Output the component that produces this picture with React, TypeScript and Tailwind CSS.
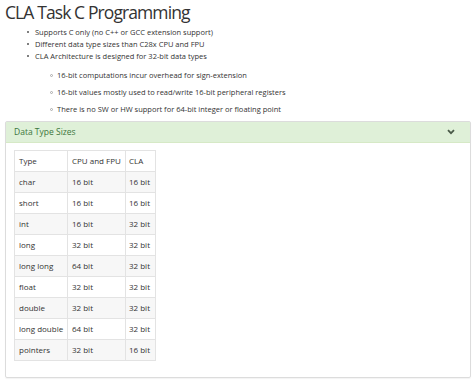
import React from "react";

const rows: [string, string, string][] = [
  ["char", "16 bit", "16 bit"],
  ["short", "16 bit", "16 bit"],
  ["int", "16 bit", "32 bit"],
  ["long", "32 bit", "32 bit"],
  ["long long", "64 bit", "32 bit"],
  ["float", "32 bit", "32 bit"],
  ["double", "32 bit", "32 bit"],
  ["long double", "64 bit", "32 bit"],
  ["pointers", "32 bit", "16 bit"],
];

export default function App() {
  return (
    <div
      className="w-[474px] h-[381px] bg-white text-[#333] overflow-hidden"
      style={{ fontFamily: '"Open Sans", "Noto Sans", sans-serif' }}
    >
      <h1 className="pl-[5px] pt-0 text-[17.5px] leading-[24px] tracking-[-0.9px] text-[#333]">
        CLA Task C Programming
      </h1>
      <ul className="mt-[2px] pl-[27px] text-[7.5px] leading-[12px]">
        <li className="flex items-center">
          <span className="w-[2px] h-[2px] rounded-full bg-[#555] mr-[6px]" />
          Supports C only (no C++ or GCC extension support)
        </li>
        <li className="flex items-center">
          <span className="w-[2px] h-[2px] rounded-full bg-[#555] mr-[6px]" />
          Different data type sizes than C28x CPU and FPU
        </li>
        <li className="flex items-center">
          <span className="w-[2px] h-[2px] rounded-full bg-[#555] mr-[6px]" />
          CLA Architecture is designed for 32-bit data types
        </li>
      </ul>
      <ul className="mt-[5px] pl-[50px] text-[7.5px] leading-[17px]">
        <li className="flex items-center">
          <span className="w-[3px] h-[3px] rounded-full border-[0.5px] border-[#aaa] mr-[4px]" />
          16-bit computations incur overhead for sign-extension
        </li>
        <li className="flex items-center">
          <span className="w-[3px] h-[3px] rounded-full border-[0.5px] border-[#aaa] mr-[4px]" />
          16-bit values mostly used to read/write 16-bit peripheral registers
        </li>
        <li className="flex items-center">
          <span className="w-[3px] h-[3px] rounded-full border-[0.5px] border-[#aaa] mr-[4px]" />
          There is no SW or HW support for 64-bit integer or floating point
        </li>
      </ul>
      <div className="mt-[3px] ml-[5px] w-[466px] h-[257px] border border-[#dcdcdc] rounded-[2px] shadow-[0_1px_1px_rgba(0,0,0,0.05)]">
        <div className="h-[21px] bg-[#dff0d8] border-b border-[#d6e9c6] flex items-center justify-between pl-[8px] pr-[15px]">
          <span className="text-[8.5px] text-[#3c763d]">Data Type Sizes</span>
          <svg width="8" height="6" viewBox="0 0 8 6">
            <path d="M1 1.2 L4 4.2 L7 1.2" fill="none" stroke="#4a5a48" strokeWidth="1.8" />
          </svg>
        </div>
        <div className="pt-[7px] pl-[8px]">
          <table className="table-fixed w-[141px] border-collapse text-[8px] text-[#333]">
            <colgroup>
              <col className="w-[53px]" />
              <col className="w-[58px]" />
              <col className="w-[30px]" />
            </colgroup>
            <thead>
              <tr className="h-[21px]">
                <th className="border border-[#e3e3e3] text-left font-normal pl-[4px] whitespace-nowrap">Type</th>
                <th className="border border-[#e3e3e3] text-left font-normal pl-[4px] whitespace-nowrap">CPU and FPU</th>
                <th className="border border-[#e3e3e3] text-left font-normal pl-[3px] whitespace-nowrap">CLA</th>
              </tr>
            </thead>
            <tbody>
              {rows.map((r, i) => (
                <tr key={r[0]} className={`h-[21px] ${i % 2 === 0 ? "bg-[#f7f7f7]" : "bg-white"}`}>
                  <td className="border border-[#e3e3e3] pl-[4px] whitespace-nowrap">{r[0]}</td>
                  <td className="border border-[#e3e3e3] pl-[4px] whitespace-nowrap">{r[1]}</td>
                  <td className="border border-[#e3e3e3] pl-[3px] whitespace-nowrap">{r[2]}</td>
                </tr>
              ))}
            </tbody>
          </table>
        </div>
      </div>
    </div>
  );
}
